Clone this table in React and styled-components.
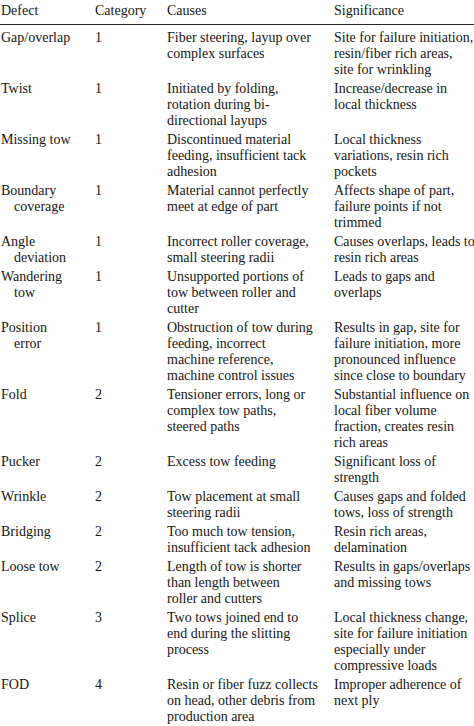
import React from 'react'
import styled, {createGlobalStyle} from "styled-components"

//全局样式
const GlobalStyle = createGlobalStyle`
    html, body {
        margin: 0;
        padding: 0;
        background: #fff;
    }
`;

const TableBox = styled.div`
    width: 474px;
    padding: 3px 0 0 1px;
    box-sizing: border-box;
    font-family: "Liberation Serif", "Times New Roman", serif;
    font-size: 14px;
    color: #161616;
`;

const Row = styled.div`
    display: grid;
    grid-template-columns: 94px 72px 167px 1fr;
    line-height: 16px;
    padding-top: ${props => props.$gap}px;
`;

const HeadRow = styled(Row)`
    padding-bottom: 5px;
    margin-bottom: 5px;
    margin-left: -1px;
    padding-left: 1px;
    border-bottom: 1px solid #2a2a2a;
`;

const Cell = styled.div`
    white-space: nowrap;
`;

const DefectCell = styled(Cell)`
    padding-left: 13px;
    text-indent: -13px;
`;

//表格数据 (defect 用数组表示换行)
const rows = [
    [["Gap/overlap"], "1", ["Fiber steering, layup over", "complex surfaces"], ["Site for failure initiation,", "resin/fiber rich areas,", "site for wrinkling"]],
    [["Twist"], "1", ["Initiated by folding,", "rotation during bi-", "directional layups"], ["Increase/decrease in", "local thickness"]],
    [["Missing tow"], "1", ["Discontinued material", "feeding, insufficient tack", "adhesion"], ["Local thickness", "variations, resin rich", "pockets"]],
    [["Boundary", "coverage"], "1", ["Material cannot perfectly", "meet at edge of part"], ["Affects shape of part,", "failure points if not", "trimmed"]],
    [["Angle", "deviation"], "1", ["Incorrect roller coverage,", "small steering radii"], ["Causes overlaps, leads to", "resin rich areas"]],
    [["Wandering", "tow"], "1", ["Unsupported portions of", "tow between roller and", "cutter"], ["Leads to gaps and", "overlaps"]],
    [["Position", "error"], "1", ["Obstruction of tow during", "feeding, incorrect", "machine reference,", "machine control issues"], ["Results in gap, site for", "failure initiation, more", "pronounced influence", "since close to boundary"]],
    [["Fold"], "2", ["Tensioner errors, long or", "complex tow paths,", "steered paths"], ["Substantial influence on", "local fiber volume", "fraction, creates resin", "rich areas"]],
    [["Pucker"], "2", ["Excess tow feeding"], ["Significant loss of", "strength"]],
    [["Wrinkle"], "2", ["Tow placement at small", "steering radii"], ["Causes gaps and folded", "tows, loss of strength"]],
    [["Bridging"], "2", ["Too much tow tension,", "insufficient tack adhesion"], ["Resin rich areas,", "delamination"]],
    [["Loose tow"], "2", ["Length of tow is shorter", "than length between", "roller and cutters"], ["Results in gaps/overlaps", "and missing tows"]],
    [["Splice"], "3", ["Two tows joined end to", "end during the slitting", "process"], ["Local thickness change,", "site for failure initiation", "especially under", "compressive loads"]],
    [["FOD"], "4", ["Resin or fiber fuzz collects", "on head, other debris from", "production area"], ["Improper adherence of", "next ply"]]
];

const Lines = ({list}) => list.map((line, i) => (
    <React.Fragment key={i}>
        {i > 0 && <br/>}
        {line}
    </React.Fragment>
));

export default function App() {
    return (
        <TableBox>
            <GlobalStyle/>
            <HeadRow $gap={0}>
                <Cell>Defect</Cell>
                <Cell>Category</Cell>
                <Cell>Causes</Cell>
                <Cell>Significance</Cell>
            </HeadRow>
            {rows.map(([defect, cat, causes, sig], i) => (
                <Row key={i} $gap={i === 0 ? 0 : 3}>
                    <DefectCell><Lines list={defect}/></DefectCell>
                    <Cell>{cat}</Cell>
                    <Cell><Lines list={causes}/></Cell>
                    <Cell><Lines list={sig}/></Cell>
                </Row>
            ))}
        </TableBox>
    )
}
